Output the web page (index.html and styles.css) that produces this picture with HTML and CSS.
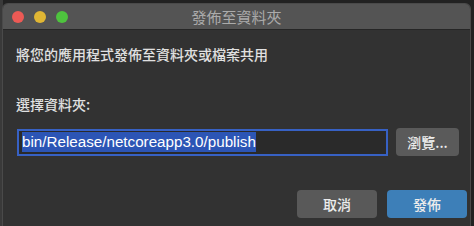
FILE: index.html
```html
<!DOCTYPE html>
<html>
	<head>
		<meta charset="utf-8">
		<link rel="stylesheet" href="styles.css">
	</head>
	<body>
		<div class="window">
			<div class="titlebar">
				<div class="lights">
					<span class="light red"></span>
					<span class="light yellow"></span>
					<span class="light green"></span>
				</div>
				<div class="title">發佈至資料夾</div>
			</div>
			<div class="content">
				<p class="intro">將您的應用程式發佈至資料夾或檔案共用</p>
				<p class="label">選擇資料夾:</p>
				<div class="path_row">
					<div class="path_box"><span class="selected">bin/Release/netcoreapp3.0/publish</span></div>
					<button class="btn browse">瀏覽...</button>
				</div>
				<div class="actions">
					<button class="btn cancel">取消</button>
					<button class="btn primary">發佈</button>
				</div>
			</div>
		</div>
	</body>
</html>
```

FILE: styles.css
```css
html, body {
	margin: 0;
	height: 100%;
}

body {
	font-family: "Liberation Sans", "Noto Sans CJK TC", sans-serif;
	font-size: 14px;
	color: #dcdcdc;
	overflow: hidden;
	padding-left: 3px;
	padding-top: 4px;
	box-sizing: border-box;
	background: linear-gradient(to right, #3a3a3a 0, #3a3a3a 3px, #222 3px);
}

.window {
	width: 467px;
	height: 222px;
	background: #323232;
	border-radius: 5px 5px 0 0;
	box-shadow: 0 0 0 1px #4a4a4a;
	overflow: hidden;
}

.titlebar {
	height: 25px;
	background: #545454;
	border-bottom: 1px solid #262626;
	display: flex;
	align-items: center;
	position: relative;
}

.lights {
	display: flex;
	gap: 10px;
	margin-left: 9px;
}
.light {
	width: 12px;
	height: 12px;
	border-radius: 50%;
}
.red { background: #ec5a55; }
.yellow { background: #e0b634; }
.green { background: #4ec33e; }

.title {
	position: absolute;
	left: 0;
	right: 0;
	text-align: center;
	font-family: "Noto Sans CJK TC", sans-serif;
	font-size: 15px;
	color: #ababab;
}

.content {
	padding: 0 3px 0 13px;
}

.intro, .label {
	margin: 0;
	line-height: 20px;
	font-family: "Noto Sans CJK TC", sans-serif;
	font-size: 14px;
	font-weight: 500;
	color: #e0e0e0;
}
.intro {
	margin-top: 14px;
}
.label {
	margin-top: 30px;
}

.path_row {
	display: flex;
	align-items: center;
	margin-top: 14px;
}

.path_box {
	width: 364px;
	height: 23px;
	border: 2px solid #3761c4;
	background: #2a2a2a;
	padding-left: 3px;
	display: flex;
	align-items: center;
	margin-left: 1px;
}
.selected {
	background: #2c55b5;
	color: #ffffff;
	line-height: 20px;
	font-size: 15.2px;
}

.btn {
	border: none;
	border-radius: 4px;
	font-family: "Noto Sans CJK TC", sans-serif;
	font-size: 14px;
	font-weight: 500;
	color: #ececec;
	height: 28px;
	padding: 0;
}

.browse {
	width: 63px;
	margin-left: 8px;
	background: #5a5a5a;
}

.actions {
	display: flex;
	justify-content: flex-end;
	gap: 10px;
	margin-top: 34px;
}
.cancel {
	width: 80px;
	background: #595959;
}
.primary {
	width: 80px;
	background: #3d7fb8;
}
```
